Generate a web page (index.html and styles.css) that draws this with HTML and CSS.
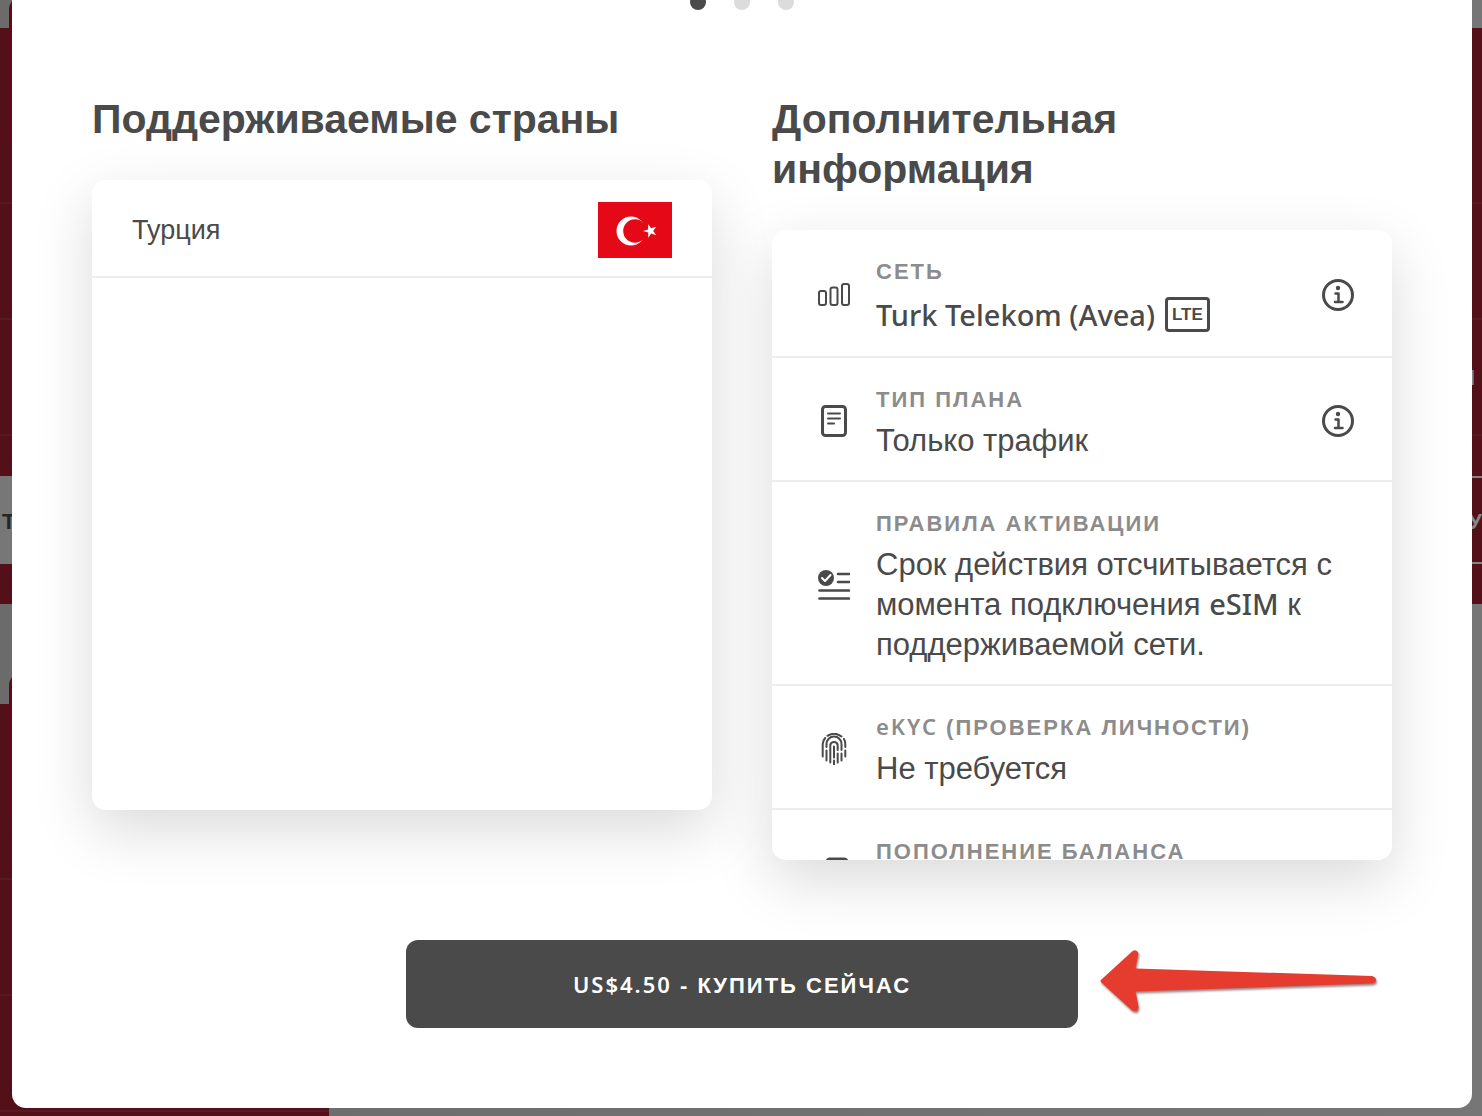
FILE: index.html
```html
<!DOCTYPE html>
<html lang="ru">
<head>
  <meta charset="UTF-8" />
  <meta name="viewport" content="width=device-width, initial-scale=1.0"/>
  <title>eSIM Турция</title>
  <link rel="stylesheet" href="styles.css">
</head>
<body>

  <div class="page" aria-hidden="true">
    <div class="plans">
      <div class="plan">
        <div class="plan-thumb"></div>
        <div class="plan-head"></div>
        <div class="plan-row"></div>
        <div class="plan-row"></div>
        <div class="plan-button">Т</div>
      </div>
      <div class="plan">
        <div class="plan-thumb"></div>
        <div class="plan-head"></div>
        <div class="plan-row"></div>
        <div class="plan-row"></div>
      </div>
    </div>
    <div class="plans right">
      <div class="plan">
        <div class="plan-head"></div>
        <div class="plan-row"></div>
        <div class="plan-row">Й</div>
        <div class="plan-button">У</div>
      </div>
    </div>
  </div>

  <main class="modal">
    <div class="dots">
      <span class="dot active"></span>
      <span class="dot"></span>
      <span class="dot"></span>
    </div>

    <div class="columns">
      <section>
        <h2>Поддерживаемые страны</h2>
        <ul class="card">
          <li class="country">
            <span>Турция</span>
            <svg class="flag" viewBox="0 0 74 56">
              <rect width="74" height="56" fill="#e50917"/>
              <circle cx="33" cy="29" r="14.500" fill="#fff"/>
              <circle cx="37" cy="29" r="11.800" fill="#e50917"/>
              <path d="M45 29l5-1.500.2-5.300 3 4.100 5-1.500-3 4.200 3 4.200-5-1.600-3 4.100.1-5.200z" fill="#fff"/>
            </svg>
          </li>
        </ul>
      </section>

      <section>
        <h2>Дополнительная информация</h2>
        <ul class="card">
          <li class="info">
            <svg class="icon" viewBox="0 0 32 32">
              <rect x="1" y="12" width="7" height="14" rx="2"/>
              <rect x="12.500" y="8.500" width="7" height="17.500" rx="2"/>
              <rect x="24" y="5" width="7" height="21" rx="2"/>
            </svg>
            <div class="text">
              <h3>СЕТЬ</h3>
              <p class="network"><span class="latin">Turk Telekom (Avea)</span> <span class="badge">LTE</span></p>
            </div>
            <button class="help" aria-label="Сеть: подробнее">
              <svg class="icon" viewBox="0 0 32 32">
                <circle cx="16" cy="16" r="14.500" stroke-width="3"/>
                <path d="M13.500 14.500h3v8.500M13 23h7.500" stroke-width="2.500"/>
                <circle class="fill" cx="16" cy="9" r="2.200"/>
              </svg>
            </button>
          </li>
          <li class="info">
            <svg class="icon" viewBox="0 0 32 32">
              <rect x="4.500" y="1.500" width="23" height="29" rx="3" stroke-width="3"/>
              <path d="M10 8.500h12M10 13.500h12M10 18.500h6"/>
            </svg>
            <div class="text">
              <h3>ТИП ПЛАНА</h3>
              <p>Только трафик</p>
            </div>
            <button class="help" aria-label="Тип плана: подробнее">
              <svg class="icon" viewBox="0 0 32 32">
                <circle cx="16" cy="16" r="14.500" stroke-width="3"/>
                <path d="M13.500 14.500h3v8.500M13 23h7.500" stroke-width="2.500"/>
                <circle class="fill" cx="16" cy="9" r="2.200"/>
              </svg>
            </button>
          </li>
          <li class="info">
            <svg class="icon" viewBox="0 0 32 32">
              <circle class="fill" cx="8" cy="9" r="8"/>
              <path class="check" d="M4 9l3 3 5.500-6"/>
              <path d="M20 5h11M20 13h11M1.500 21.500h29.500M1.500 29.500h29.500" stroke-width="2.600"/>
            </svg>
            <div class="text">
              <h3>ПРАВИЛА АКТИВАЦИИ</h3>
              <p>Срок действия отсчитывается с момента подключения <span class="latin">eSIM</span> к поддерживаемой сети.</p>
            </div>
          </li>
          <li class="info">
            <svg class="icon" viewBox="0 0 32 32">
              <path d="M9.500 2.800a12.500 12.500 0 0 1 14 .7M26 6a11 11 0 0 1 1.300 5v3M27.300 17.500v6M4.700 23.500V11a10 10 0 0 1 2.500-6"/>
              <path d="M8.500 14v-3a7.500 7.500 0 0 1 15 0v6M23.500 20.500v7M8.500 17.500v10"/>
              <path d="M12.300 29.500V12a3.800 3.800 0 0 1 7.400 0v5M19.700 20.500v9M16 13.500v11M16 27.500v4"/>
            </svg>
            <div class="text">
              <h3><span class="latin">eKYC</span> (ПРОВЕРКА ЛИЧНОСТИ)</h3>
              <p>Не требуется</p>
            </div>
          </li>
          <li class="info">
            <svg class="icon" viewBox="0 0 32 32">
              <rect x="9" y="2" width="20" height="28" rx="3" stroke-width="3"/>
            </svg>
            <div class="text">
              <h3>ПОПОЛНЕНИЕ БАЛАНСА</h3>
              <p>Доступно</p>
            </div>
          </li>
        </ul>
      </section>
    </div>

    <div class="buy">
      <button class="buy-button"><span class="latin">US$4.50</span> - КУПИТЬ СЕЙЧАС</button>
      <svg class="arrow" viewBox="0 0 280 68">
        <path d="M2 30L32 2.500Q36-.500 38.500 4L35.500 19.500 272 27Q276 28 276 31T272 34.500L35.500 42.500 38.500 58Q38 64 32 61.500L2 34Q-1 32 2 30z"/>
      </svg>
    </div>
  </main>

</body>
</html>
```

FILE: styles.css
```css
* {
  box-sizing: border-box;
}

body {
  position: relative;
  margin: 0;
  overflow-x: hidden;
  background-color: #747474;
  color: #4a4a4a;
  font-family: "Liberation Sans", Arial, sans-serif;
}

h2,
h3,
p,
ul {
  margin: 0;
  padding: 0;
}

/* page under the overlay */
.page {
  position: absolute;
  inset: 0;
  display: grid;
  grid-template-columns: 329px 1fr;
  overflow: hidden;
  background: linear-gradient(90deg, #6b6b6b, #767676);
}

.plans {
  display: flex;
  flex-direction: column;
  gap: 100px;
  padding-top: 28px;
}

.plan {
  position: relative;
  height: 576px;
  flex-shrink: 0;
  background-color: #531018;
}

.plan-thumb {
  position: absolute;
  top: -32px;
  left: 9px;
  width: 200px;
  height: 154px;
  border-radius: 14px;
  background-color: #650619;
}

.plan-head {
  height: 176px;
  border-bottom: 2px solid #571a22;
}

.plan-row {
  height: 116px;
  padding: 46px 7px;
  border-bottom: 2px solid #571a22;
  color: #858585;
  font-size: 22px;
  font-weight: bold;
  line-height: 24px;
}

.plan-button {
  height: 88px;
  margin-top: 40px;
  padding: 0 2px;
  background-color: #777;
  color: #262626;
  font-size: 22px;
  font-weight: bold;
  line-height: 92px;
}

.right {
  text-align: right;
}

.right .plan-button {
  padding: 0;
  border: 2px solid #858585;
  border-right: 0;
  background: none;
  color: #858585;
  line-height: 88px;
}

/* modal */
.modal {
  display: flow-root;
  position: relative;
  margin: 0 10px 8px 12px;
  padding: 0 80px 80px;
  border-radius: 0 0 14px 14px;
  background-color: #fff;
}

.dots {
  display: flex;
  justify-content: center;
  gap: 28px;
  margin-top: -6px;
}

.dot {
  width: 16px;
  height: 16px;
  border-radius: 50%;
  background-color: #dcdcdc;
}

.dot.active {
  background-color: #4a4a4a;
}

.columns {
  display: grid;
  grid-template-columns: 1fr 1fr;
  gap: 60px;
  margin-top: 84px;
}

h2 {
  margin-bottom: 36px;
  padding-right: 40px;
  font-size: 41px;
  line-height: 50px;
}

.card {
  height: 630px;
  overflow: hidden;
  border-radius: 14px;
  background-color: #fff;
  box-shadow: 0 20px 60px rgba(0, 0, 0, 0.15);
  list-style: none;
}

.country {
  display: flex;
  align-items: center;
  justify-content: space-between;
  padding: 22px 40px 18px;
  border-bottom: 2px solid #ededed;
  font-size: 27px;
}

.flag {
  width: 74px;
  height: 56px;
}

.info {
  display: flex;
  align-items: center;
  gap: 26px;
  padding: 22px 38px 18px 46px;
  border-bottom: 2px solid #ededed;
}

.icon {
  display: block;
  flex-shrink: 0;
  width: 32px;
  height: 32px;
  fill: none;
  stroke: #4a4a4a;
  stroke-width: 2;
  stroke-linecap: round;
  stroke-linejoin: round;
}

.icon .fill {
  fill: #4a4a4a;
  stroke: none;
}

.icon .check {
  stroke: #fff;
}

.text {
  flex: 1;
  padding: 5px 0 1px;
}

h3 {
  margin-bottom: 6px;
  color: #8c8c8c;
  font-size: 22px;
  line-height: 30px;
  letter-spacing: 2px;
}

.text p {
  font-size: 31px;
  line-height: 40px;
}

.text .network {
  display: flex;
  align-items: center;
  gap: 10px;
  min-height: 44px;
  padding-bottom: 2px;
}

.latin {
  font-family: "Noto Sans", sans-serif;
  font-weight: 600;
  line-height: 1;
}

.text p .latin {
  font-size: 29px;
  font-weight: 500;
}

.badge {
  height: 35px;
  padding: 0 4px;
  border: 3px solid #4a4a4a;
  border-radius: 4px;
  font-size: 17px;
  font-weight: bold;
  line-height: 30px;
}

.help {
  padding: 0;
  border: none;
  background: none;
  cursor: pointer;
}

.buy {
  position: relative;
  max-width: 672px;
  margin: 80px auto 0;
}

.buy-button {
  width: 100%;
  height: 88px;
  padding: 4px 0 0;
  border: none;
  border-radius: 12px;
  background-color: #4a4a4a;
  color: #fff;
  font-family: inherit;
  font-size: 22px;
  font-weight: bold;
  letter-spacing: 2px;
  cursor: pointer;
}

.arrow {
  position: absolute;
  top: 9px;
  left: 100%;
  width: 280px;
  height: 68px;
  margin-left: 22px;
  overflow: visible;
  fill: #e63c30;
  filter: drop-shadow(1px 2px 1px rgba(60, 0, 0, 0.5));
}
```
